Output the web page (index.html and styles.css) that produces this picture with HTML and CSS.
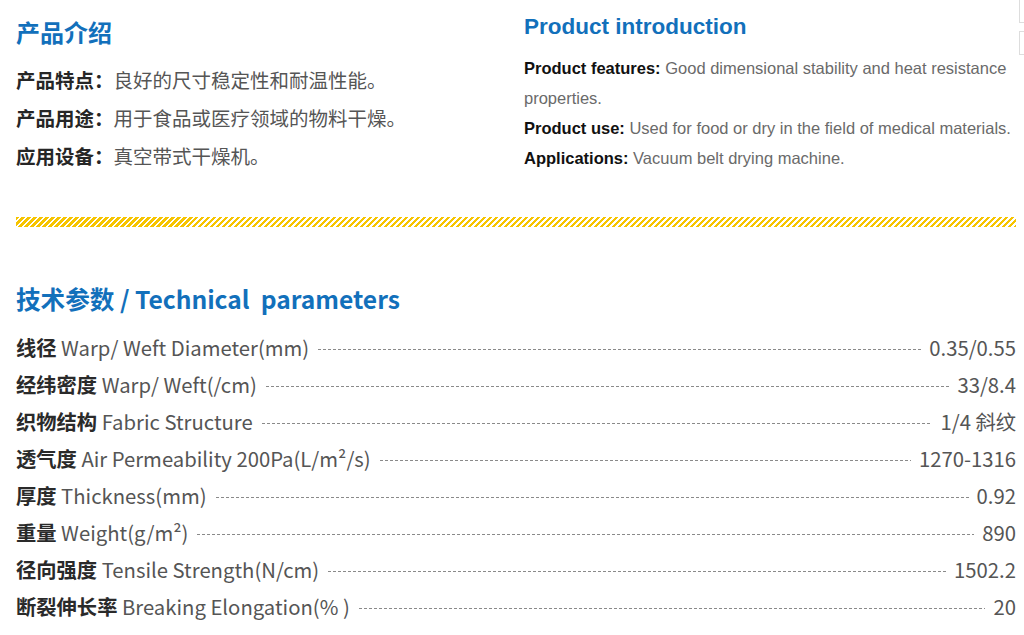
FILE: index.html
```html
<!DOCTYPE html>
<html lang="zh-CN">
<head>
<meta charset="utf-8">
<title>产品介绍</title>
<link rel="stylesheet" href="styles.css">
</head>
<body>
<div class="page">
  <section class="intro">
    <div class="col-cn">
      <h2 class="h-cn">产品介绍</h2>
      <p class="line-cn"><b>产品特点：</b>良好的尺寸稳定性和耐温性能。</p>
      <p class="line-cn"><b>产品用途：</b>用于食品或医疗领域的物料干燥。</p>
      <p class="line-cn"><b>应用设备：</b>真空带式干燥机。</p>
    </div>
    <div class="col-en">
      <h2 class="h-en">Product introduction</h2>
      <p class="line-en"><b>Product features: </b><span>Good dimensional stability and heat resistance</span></p>
      <p class="line-en"><span>properties.</span></p>
      <p class="line-en"><b>Product use: </b><span>Used for food or dry in the field of medical materials.</span></p>
      <p class="line-en"><b>Applications: </b><span>Vacuum belt drying machine.</span></p>
    </div>
  </section>

  <div class="stripe"></div>

  <section class="params">
    <h2 class="h-params">技术参数 / Technical&nbsp; parameters</h2>
    <div class="row"><span class="label"><b>线径</b> Warp/ Weft Diameter(mm)</span><span class="leader"></span><span class="val">0.35/0.55</span></div>
    <div class="row"><span class="label"><b>经纬密度</b> Warp/ Weft(/cm)</span><span class="leader"></span><span class="val">33/8.4</span></div>
    <div class="row"><span class="label"><b>织物结构</b> Fabric Structure</span><span class="leader"></span><span class="val">1/4 斜纹</span></div>
    <div class="row"><span class="label"><b>透气度</b> Air Permeability 200Pa(L/m²/s)</span><span class="leader"></span><span class="val">1270-1316</span></div>
    <div class="row"><span class="label"><b>厚度</b> Thickness(mm)</span><span class="leader"></span><span class="val">0.92</span></div>
    <div class="row"><span class="label"><b>重量</b> Weight(g/m²)</span><span class="leader"></span><span class="val">890</span></div>
    <div class="row"><span class="label"><b>径向强度</b> Tensile Strength(N/cm)</span><span class="leader"></span><span class="val">1502.2</span></div>
    <div class="row"><span class="label"><b>断裂伸长率</b> Breaking Elongation(% )</span><span class="leader"></span><span class="val">20</span></div>
  </section>
</div>
<div class="edge-widget">
  <div class="edge-box"></div>
  <div class="edge-box"></div>
</div>
</body>
</html>
```

FILE: styles.css
```css
html, body {
  margin: 0;
  padding: 0;
  background: #ffffff;
}

body {
  font-family: "Noto Sans CJK SC", "Noto Sans", sans-serif;
  color: #555555;
}

.page {
  padding: 0 8px 0 16px;
}

.intro {
  display: grid;
  grid-template-columns: 508px 490px;
  align-items: start;
}

.h-cn {
  margin: 16px 0 13px;
  font-size: 24px;
  line-height: 32px;
  font-weight: 700;
  color: #1270bb;
}

.line-cn {
  margin: 0;
  font-size: 19.5px;
  line-height: 38px;
  color: #555555;
}

.line-cn b {
  color: #262626;
  font-weight: 700;
}

.col-en {
  font-family: "Liberation Sans", Arial, sans-serif;
}

.h-en {
  margin: 12px 0 11px;
  font-size: 22.5px;
  line-height: 30px;
  font-weight: 700;
  color: #1270bb;
}

.line-en {
  margin: 0;
  font-size: 16.5px;
  line-height: 30px;
  color: #6a6a6a;
  white-space: nowrap;
}

.line-en b {
  color: #111111;
}

.stripe {
  margin-top: 42px;
  width: 1000px;
  height: 10px;
  background: repeating-linear-gradient(135deg, #f6c400 0 2.2px, transparent 2.2px 4.24px);
}

.h-params {
  margin: 55px 0 15px;
  font-size: 24.6px;
  line-height: 32px;
  font-weight: 700;
  color: #1270bb;
}

.row {
  display: flex;
  align-items: center;
  width: 1000px;
  font-size: 20.3px;
  line-height: 37px;
  color: #555555;
}

.label {
  white-space: nowrap;
}

.label b {
  color: #2a2a2a;
  font-weight: 700;
}

.leader {
  flex: 1;
  height: 1px;
  margin: 3px 8px 0 9px;
  background: repeating-linear-gradient(to right, #8a8a8a 0 3px, transparent 3px 5px);
}

.val {
  white-space: nowrap;
}

.edge-widget {
  position: absolute;
  top: 0;
  left: 1019px;
  width: 10px;
}

.edge-box {
  height: 22px;
  margin-bottom: 8px;
  border: 1px solid #dddddd;
  border-top: none;
  background: #ffffff;
}

.edge-box + .edge-box {
  border-top: 1px solid #dddddd;
}
```
